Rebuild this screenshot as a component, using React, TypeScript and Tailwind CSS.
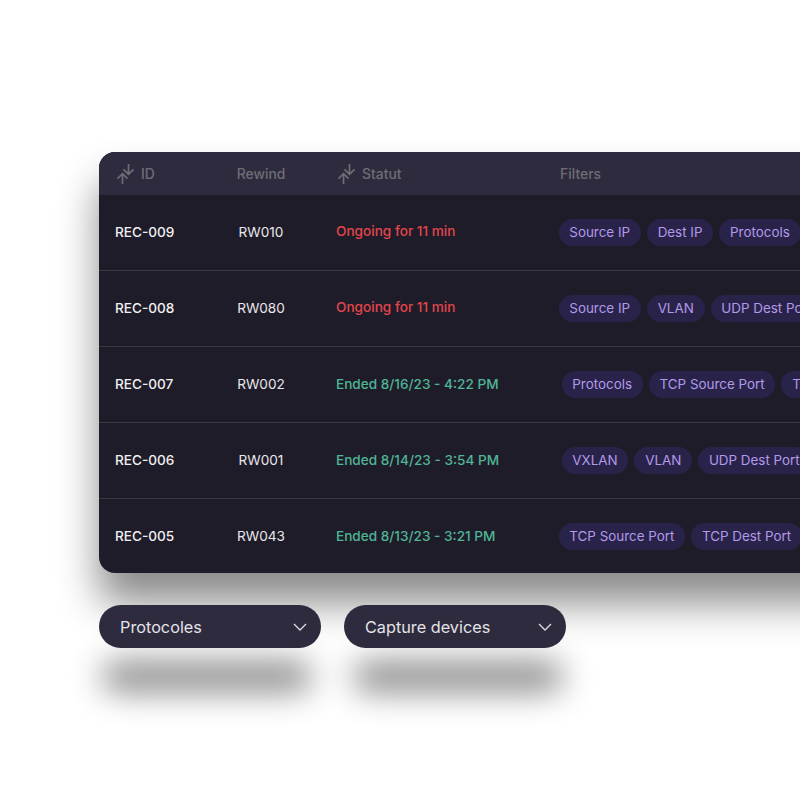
const rows = [
  { id: "REC-009", rw: "RW010", st: "Ongoing for 11 min", on: true, ml: "-ml-[1.5px]", tags: ["Source IP", "Dest IP", "Protocols"] },
  { id: "REC-008", rw: "RW080", st: "Ongoing for 11 min", on: true, ml: "-ml-[1.5px]", tags: ["Source IP", "VLAN", "UDP Dest Port"] },
  { id: "REC-007", rw: "RW002", st: "Ended 8/16/23 - 4:22 PM", on: false, ml: "ml-[1.5px]", tags: ["Protocols", "TCP Source Port", "TCP Dest Port"] },
  { id: "REC-006", rw: "RW001", st: "Ended 8/14/23 - 3:54 PM", on: false, ml: "ml-[1.5px]", tags: ["VXLAN", "VLAN", "UDP Dest Port"] },
  { id: "REC-005", rw: "RW043", st: "Ended 8/13/23 - 3:21 PM", on: false, ml: "-ml-[1.5px]", tags: ["TCP Source Port", "TCP Dest Port", "VLAN"] },
];

function SortIcon() {
  return (
    <svg width="18" height="20" viewBox="0 0 18 20" fill="none" stroke="#6e6d76" strokeWidth="1.7" className="shrink-0">
      <path d="M11.5 0v10M6.5 5.3l5 5 5-5M5.5 20v-10M0.5 14.7l5-5 5 5" />
    </svg>
  );
}

function Select({ label, shadow }: { label: string; shadow: string }) {
  return (
    <div className={`flex h-[43px] w-[222px] items-center justify-between rounded-[22px] bg-[#2e2b3e] pl-[21px] pr-[14px] text-[16.25px] text-[#e4e3e8] ${shadow}`}>
      <span className="pt-px">{label}</span>
      <svg width="14" height="8" viewBox="0 0 14 8" fill="none" stroke="#dedde3" strokeWidth="1.3">
        <path d="M1 1l6 6 6-6" />
      </svg>
    </div>
  );
}

export default function App() {
  return (
    <div className="h-[800px] w-[800px] overflow-hidden bg-white pl-[99px] pt-[152px] font-['Inter',sans-serif]">
      <div className="w-[800px] overflow-hidden rounded-l-[16px] bg-[#1f1c29] shadow-[0_30px_40px_rgba(0,0,0,0.46)]">
        <div className="grid h-[43px] grid-cols-[124px_76px_261px_1fr] items-center bg-[#2e2b3e] pt-px text-[13.9px] font-medium text-[#6e6d76]">
          <div className="flex items-center gap-[6px] pl-[18px]"><SortIcon />ID</div>
          <div className="text-center">Rewind</div>
          <div className="flex items-center gap-[6px] pl-[39px]"><SortIcon />Statut</div>
          <div>Filters</div>
        </div>
        {rows.map((r, i) => (
          <div key={r.id} className={`grid grid-cols-[124px_76px_261px_1fr] items-center text-[13.6px] ${i > 0 ? "border-t border-[#3a393f]" : ""} ${i > 0 && i < 4 ? "h-[76px]" : "h-[75px]"}`}>
            <div className="pl-4 font-medium text-[#f1f0f3]">{r.id}</div>
            <div className="text-center text-[#e8e7eb]">{r.rw}</div>
            <div className={`pl-[37px] font-medium ${r.on ? "-mt-[3px] text-[#e2464b]" : "text-[#4fb596]"}`}>{r.st}</div>
            <div className={`flex gap-[6px] whitespace-nowrap text-[13.4px] ${r.ml}`}>
              {r.tags.map((t) => (
                <span key={t} className="flex h-[27px] items-center rounded-full bg-[#29234a] px-[10.8px] text-[#b29ae8]">{t}</span>
              ))}
            </div>
          </div>
        ))}
      </div>
      <div className="mt-[32px] flex gap-[23px]">
        <Select label="Protocoles" shadow="shadow-[-3px_50px_32px_-6px_rgba(0,0,0,0.46)]" />
        <Select label="Capture devices" shadow="shadow-[3px_50px_32px_-6px_rgba(0,0,0,0.46)]" />
      </div>
    </div>
  );
}
